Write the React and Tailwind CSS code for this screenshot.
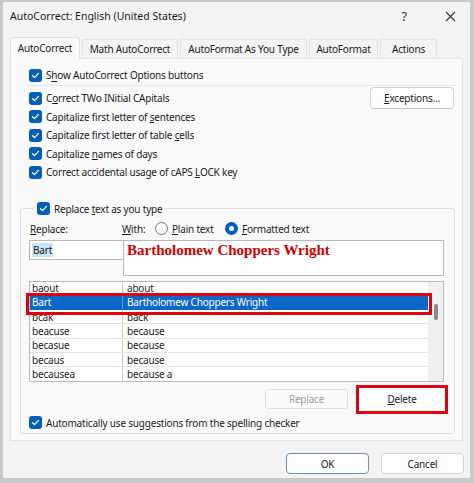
import React from 'react';

const font = { fontFamily: '"Noto Sans", "Open Sans", sans-serif' };

const Check = () => (
    <span className="w-[13px] h-[13px] rounded-[3px] bg-[#005fb8] flex items-center justify-center flex-shrink-0">
        <svg width="9" height="9" viewBox="0 0 9 9">
            <path d="M1.6 4.7l1.9 1.9L7.5 2.4" fill="none" stroke="#fff" strokeWidth="1.3" strokeLinecap="round" strokeLinejoin="round" />
        </svg>
    </span>
);

const Radio = ({ on }) =>
    on ? (
        <span className="w-[13px] h-[13px] rounded-full bg-[#005fb8] flex items-center justify-center flex-shrink-0">
            <span className="w-[5px] h-[5px] rounded-full bg-white" />
        </span>
    ) : (
        <span className="w-[13px] h-[13px] rounded-full border border-[#7a7a7a] bg-[#f9f9f9] flex-shrink-0" />
    );

const CheckRow = ({ children, h = 'h-[18.5px]' }) => (
    <div className={`flex items-center gap-[4px] ${h}`}>
        <Check />
        <span>{children}</span>
    </div>
);

const rows = [
    ['baout', 'about'],
    ['Bart', 'Bartholomew Choppers Wright'],
    ['bcak', 'back'],
    ['beacuse', 'because'],
    ['becasue', 'because'],
    ['becaus', 'because'],
    ['becausea', 'because a'],
];

const tabs = [
    { label: 'Math AutoCorrect', w: 'w-[96px]' },
    { label: 'AutoFormat As You Type', w: 'w-[127px]' },
    { label: 'AutoFormat', w: 'w-[69px]' },
    { label: 'Actions', w: 'w-[57px]' },
];

export default function App() {
    return (
        <div className="w-[474px] h-[483px] bg-[#c9c9c9] pt-[2px] pl-[3px] pr-[4px] pb-[5px] text-[10px] tracking-[-0.2px] leading-[14px] text-[#1b1b1b]" style={font}>
            <div className="h-full bg-[#f3f3f3] flex flex-col">
                {/* Title bar */}
                <div className="h-[34px] flex items-center pl-[7px] pr-[14px]">
                    <span className="text-[10.5px] tracking-normal flex-1 pb-[6px]">AutoCorrect: English (United States)</span>
                    <span className="text-[13px] text-[#333] mr-[38px] pb-[6px]">?</span>
                    <svg width="11" height="11" viewBox="0 0 11 11" className="mb-[6px]">
                        <path d="M1 1l9 9M10 1l-9 9" stroke="#333" strokeWidth="1.1" />
                    </svg>
                </div>

                {/* Tabs */}
                <div className="flex items-end ml-[7px] h-[22px] gap-[2px] whitespace-nowrap">
                    <div className="w-[70px] h-[22px] bg-[#f9f9f9] border border-b-0 border-[#e0e0e0] rounded-t-[3px] flex items-center justify-center pb-[1px] relative z-10 -mb-px">
                        AutoCorrect
                    </div>
                    {tabs.map((t) => (
                        <div key={t.label} className={`${t.w} h-[19px] bg-[#f3f3f3] border border-b-0 border-[#e2e2e2] rounded-t-[3px] flex items-center justify-center`}>
                            {t.label}
                        </div>
                    ))}
                </div>

                {/* Panel */}
                <div className="mx-[7px] h-[383px] bg-[#f9f9f9] border border-[#e3e3e3] pt-[7px] flex flex-col">
                    <div className="pl-[18px]">
                        <CheckRow h="h-[18px]">
                            S<u className="underline-offset-2">h</u>ow AutoCorrect Options buttons
                        </CheckRow>
                    </div>
                    <div className="ml-[16px] mr-[7px] mt-[1px] h-px bg-[#e6e6e6]" />
                    <div className="flex pl-[18px] pr-[8px] mt-[3px]">
                        <div className="flex-1">
                            <CheckRow>C<u>o</u>rrect TWo INitial CApitals</CheckRow>
                            <CheckRow>Capitalize first letter of <u>s</u>entences</CheckRow>
                            <CheckRow>Capitalize first letter of table <u>c</u>ells</CheckRow>
                            <CheckRow>Capitalize <u>n</u>ames of days</CheckRow>
                            <CheckRow>Correct accidental usage of cAPS <u>L</u>OCK key</CheckRow>
                        </div>
                        <button className="w-[84px] h-[22px] bg-[#fdfdfd] border border-[#d3d3d3] border-b-[#c4c4c4] rounded-[4px] -mt-[2px]">
                            <u>E</u>xceptions...
                        </button>
                    </div>

                    {/* Replace group */}
                    <fieldset className="ml-[9px] mr-[7px] mt-[19px] border border-[#e0e0e0] rounded-[3px] pl-[8px] pr-[10px] pb-[1px]">
                        <legend className="ml-[6px] px-[2px]">
                            <div className="flex items-center gap-[4px] h-[16px]">
                                <Check />
                                <span>Replace <u>t</u>ext as you type</span>
                            </div>
                        </legend>

                        <div className="flex items-center h-[16px] mt-[4px]">
                            <span className="w-[93px] pl-[1px]"><u>R</u>eplace:</span>
                            <span className="w-[33px]"><u>W</u>ith:</span>
                            <Radio />
                            <span className="ml-[4px] w-[53px]"><u>P</u>lain text</span>
                            <Radio on />
                            <span className="ml-[4px]"><u>F</u>ormatted text</span>
                        </div>

                        <div className="flex mt-[3px] items-start">
                            <div className="w-[95px] h-[20px] bg-white border border-[#b9b9b9] flex items-center pl-[2px]">
                                <span className="bg-[#cce4f7] px-[1px]">Bart</span>
                            </div>
                            <div className="-ml-px flex-1 h-[36px] bg-white border border-[#b9b9b9] pl-[3px] pt-[1px] leading-[17px]">
                                <span className="text-[15px] font-bold text-[#d40000] tracking-[0px]" style={{ fontFamily: '"Liberation Serif", "DejaVu Serif", serif' }}>
                                    Bartholomew Choppers Wright
                                </span>
                            </div>
                        </div>

                        {/* List */}
                        <div className="relative mt-[5px] h-[101px] bg-white border border-[#b9b9b9] flex">
                            <div className="flex-1 overflow-hidden">
                                {rows.map(([a, b], i) => (
                                    <div
                                        key={a}
                                        className={`flex h-[14.3px] items-center border-b ${i === 1 ? 'bg-[#0b68c9] text-white border-[#0b68c9]' : 'border-[#e3e3e3]'}`}
                                    >
                                        <span className={`w-[93px] pl-[2px] h-full flex items-center border-r ${i === 1 ? 'border-[#5c9ae0]' : 'border-[#c9c9c9]'}`}>{a}</span>
                                        <span className="pl-[4px]">{b}</span>
                                    </div>
                                ))}
                            </div>
                            <div className="w-[15px] bg-[#f0f0f0] flex justify-center pt-[22px]">
                                <span className="w-[4px] h-[16px] rounded-full bg-[#8a8a8a]" />
                            </div>
                            <div className="absolute left-[-4px] top-[11px] w-[406px] h-[22px] border-[3px] border-[#e1000f]" />
                        </div>

                        <div className="flex justify-end items-center h-[29px] mt-[3px] -mr-[4px] gap-[8px]">
                            <button className="w-[83px] h-[20px] bg-[#fbfbfb] border border-[#e0e0e0] rounded-[3px] text-[#9d9d9d]">
                                Replace
                            </button>
                            <div className="w-[92px] h-[29px] border-[3px] border-[#e1000f] bg-white flex items-center justify-center">
                                <span><u>D</u>elete</span>
                            </div>
                        </div>

                        <CheckRow h="h-[18px]">Automatically use suggestions from the spelling checker</CheckRow>
                    </fieldset>
                </div>

                {/* Footer */}
                <div className="flex justify-end gap-[12px] pr-[6px] mt-[12px]">
                    <button className="w-[83px] h-[21px] bg-[#fdfdfd] border border-[#6f8db3] rounded-[4px]">OK</button>
                    <button className="w-[83px] h-[21px] bg-[#fdfdfd] border border-[#d3d3d3] rounded-[4px]">Cancel</button>
                </div>
            </div>
        </div>
    );
}
